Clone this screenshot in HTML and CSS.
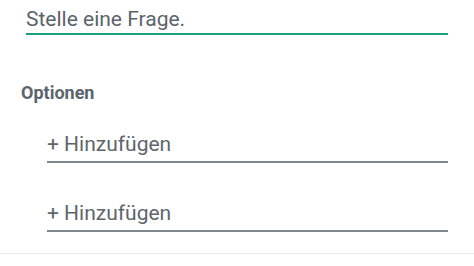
FILE: index.html
```html
<!DOCTYPE html>
<html lang="de">
<head>
<meta charset="utf-8">
<title>Frage</title>
<link rel="stylesheet" href="styles.css">
</head>
<body>
<div class="page">
  <div class="question">Stelle eine Frage.</div>
  <div class="section-title">Optionen</div>
  <div class="options">
    <div class="option">+ Hinzufügen</div>
    <div class="option">+ Hinzufügen</div>
  </div>
  <div class="separator"></div>
</div>
</body>
</html>
```
FILE: styles.css
```css
html, body {
  margin: 0;
  padding: 0;
  background: #ffffff;
}
body {
  font-family: Roboto, "Liberation Sans", sans-serif;
  width: 474px;
  height: 266px;
  overflow: hidden;
}
.page {
  display: flex;
  flex-direction: column;
}
.question {
  margin: 0 26px 0 26px;
  padding: 7px 0 2px 0;
  font-size: 21px;
  line-height: 24px;
  color: #5b646a;
  border-bottom: 2px solid #1b9e7c;
}
.section-title {
  margin: 47px 0 0 21px;
  font-size: 18px;
  line-height: 22px;
  font-weight: 700;
  color: #5a646c;
}
.options {
  display: flex;
  flex-direction: column;
  gap: 38px;
  margin: 28px 26px 0 47px;
}
.option {
  padding-bottom: 5px;
  font-size: 21px;
  line-height: 24px;
  color: #5e666b;
  border-bottom: 2px solid #808990;
}
.separator {
  margin-top: 21px;
  height: 1px;
  background: #ebebeb;
}
```
